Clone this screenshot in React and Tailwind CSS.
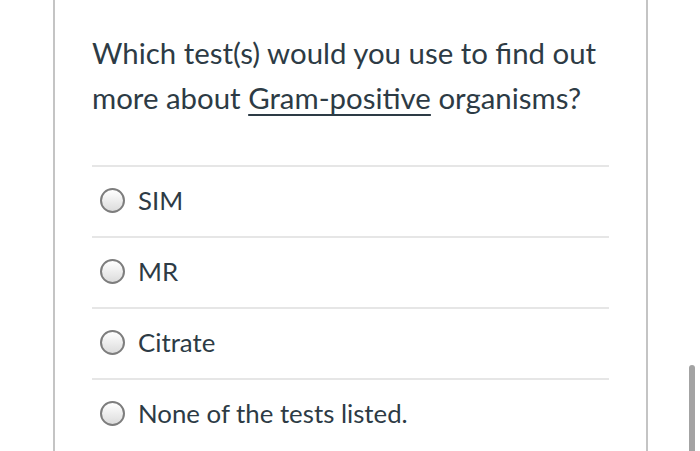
const options = ["SIM", "MR", "Citrate", "None of the tests listed."];

const Radio = () => (
  <span className="inline-block h-[25px] w-[25px] shrink-0 rounded-full border-2 border-[#7d7d7d] bg-gradient-to-b from-[#ffffff] to-[#dcdcdc]" />
);

export default function App() {
  return (
    <div className="h-[451px] w-[700px] overflow-hidden bg-white font-['Lato','Open_Sans',sans-serif] text-[#2d3b45]">
      <div className="relative flex h-full">
        <div className="ml-[53px] h-full w-[595px] border-x-2 border-[#c4c4c4] px-[37px] pt-[30px]">
          <p className="text-[29.4px] leading-[45px]">
            Which test(s) would you use to find out more about{" "}
            <span className="underline decoration-[2px] underline-offset-[5px]">Gram-positive</span>{" "}
            organisms?
          </p>
          <div className="mt-[45px]">
            {options.map((opt) => (
              <div key={opt} className="flex h-[71px] items-center gap-[13px] border-t-2 border-[#e6e6e6] pb-[3px] pl-[8px]">
                <Radio />
                <span className="text-[25.8px] leading-[32px]">{opt}</span>
              </div>
            ))}
          </div>
        </div>
        <div className="absolute left-[689px] top-[365px] h-[100px] w-[6px] rounded-full bg-[#a3a3a3]" />
      </div>
    </div>
  );
}
